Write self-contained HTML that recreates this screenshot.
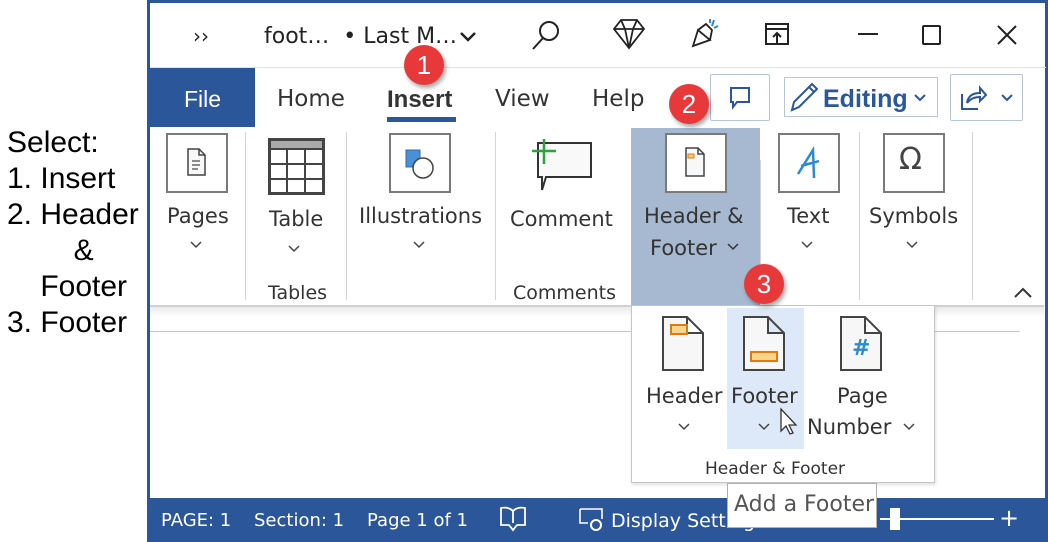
<!DOCTYPE html>
<html><head><meta charset="utf-8"><style>
*{margin:0;padding:0;box-sizing:border-box}
body{width:1048px;height:542px;position:relative;overflow:hidden;background:#fff;font-family:"Liberation Sans",sans-serif;color:#333}
.a{position:absolute}
.t{font-family:"DejaVu Sans","Liberation Sans",sans-serif;white-space:nowrap}
.badge{position:absolute;width:40px;height:40px;border-radius:50%;background:#e8393a;color:#fff;font-size:26px;text-align:center;line-height:40px;box-shadow:2px 3px 4px rgba(0,0,0,.35);font-family:"Liberation Sans",sans-serif}
.ib{position:absolute;border:2px solid #7a7a7a;background:#fff}
.sep{position:absolute;width:1px;background:#d4d4d4;top:132px;height:168px}
.lbl{font-size:21px;color:#333}
</style></head><body>
<div class="a" style="left:7px;top:125px;font-size:30px;line-height:36px;color:#000;font-family:'Liberation Sans',sans-serif;white-space:pre">Select:
1. Insert
2. Header
        &amp;
    Footer
3. Footer</div>
<div class="a" style="left:147px;top:0;width:901px;height:542px;border:3px solid #2b579a;border-bottom:none;background:#fff"></div>
<div class="a t" style="left:193px;top:24px;font-size:20px;color:#222">››</div>
<div class="a t" style="left:264px;top:24px;font-size:22px;color:#222">foot…&nbsp; • Last M…</div>
<svg class="a" style="left:458px;top:30px" width="20" height="14"><path d="M3 3 L10 10 L17 3" stroke="#222" stroke-width="2.5" fill="none"/></svg>
<svg class="a" style="left:530px;top:18px" width="34" height="32"><circle cx="19" cy="13" r="9" stroke="#222" stroke-width="2" fill="none"/><path d="M13 20 L3 31" stroke="#222" stroke-width="2"/></svg>
<svg class="a" style="left:612px;top:18px" width="34" height="32"><path d="M9 2 H25 L32 11 L17 30 L2 11 Z M2 11 H32 M9 2 L13 11 L17 30 L21 11 L25 2" stroke="#222" stroke-width="1.8" fill="none"/></svg>
<svg class="a" style="left:688px;top:16px" width="36" height="34"><path d="M5 30 L10 14 L22 24 Z M10 14 L18 8 L24 14 L22 24" stroke="#222" stroke-width="1.8" fill="none"/><path d="M26 4 L24 10 M30 10 L26 12 M22 3 L22 7" stroke="#2a8ad4" stroke-width="2"/></svg>
<svg class="a" style="left:764px;top:22px" width="28" height="26"><rect x="2" y="2" width="22" height="20" stroke="#222" stroke-width="2" fill="none"/><path d="M2 7 H24 M13 21 V11 M9 15 L13 11 L17 15" stroke="#222" stroke-width="2" fill="none"/></svg>
<div class="a" style="left:858px;top:33px;width:20px;height:2px;background:#222"></div>
<div class="a" style="left:922px;top:25px;width:19px;height:20px;border:2px solid #222;border-radius:2px"></div>
<svg class="a" style="left:996px;top:24px" width="22" height="22"><path d="M2 2 L20 20 M20 2 L2 20" stroke="#222" stroke-width="2"/></svg>
<div class="a" style="left:150px;top:67px;width:896px;height:1px;background:#e2e2e2"></div>
<div class="a" style="left:150px;top:68px;width:105px;height:59px;background:#2b579a;color:#fff;font-size:23px;text-align:center;line-height:62px" >File</div>
<div class="a t" style="left:277px;top:86px;font-size:23px">Home</div>
<div class="a" style="left:387px;top:86px;font-size:24px;font-weight:bold;color:#333;font-family:'Liberation Sans',sans-serif">Insert</div>
<div class="a" style="left:387px;top:117px;width:69px;height:5px;background:#2b579a"></div>
<div class="a t" style="left:495px;top:86px;font-size:23px">View</div>
<div class="a t" style="left:592px;top:86px;font-size:23px">Help</div>
<div class="a" style="left:710px;top:74px;width:60px;height:47px;border:1px solid #b8c6da;border-radius:2px"></div>
<svg class="a" style="left:729px;top:86px" width="24" height="24"><path d="M2 2 H20 V16 H8 L4 21 V16 H2 Z" stroke="#2b579a" stroke-width="2" fill="none"/></svg>
<div class="a" style="left:784px;top:77px;width:154px;height:40px;border:1px solid #b8c6da"></div>
<svg class="a" style="left:788px;top:80px" width="34" height="34"><path d="M4 30 L6 22 L24 4 L29 9 L11 27 Z M21 7 L26 12" stroke="#2b579a" stroke-width="2" fill="none"/></svg>
<div class="a" style="left:823px;top:85px;font-size:25px;font-weight:bold;color:#2b579a;font-family:'Liberation Sans',sans-serif">Editing</div>
<svg class="a" style="left:913px;top:93px" width="14" height="10"><path d="M2 2 L7 7 L12 2" stroke="#2b579a" stroke-width="2" fill="none"/></svg>
<div class="a" style="left:950px;top:74px;width:73px;height:47px;border:1px solid #b8c6da;border-radius:2px"></div>
<svg class="a" style="left:958px;top:84px" width="30" height="28"><path d="M4 10 V25 H20 M9 19 C10 12 15 9 22 9 V4 L28 11 L22 17 V13 C16 13 12 15 9 19" stroke="#2b579a" stroke-width="2" fill="none"/></svg>
<svg class="a" style="left:1000px;top:93px" width="14" height="10"><path d="M2 2 L7 7 L12 2" stroke="#2b579a" stroke-width="2" fill="none"/></svg>
<div class="a" style="left:150px;top:305px;width:894px;height:2px;background:#d0d0d0"></div>
<div class="a" style="left:150px;top:307px;width:894px;height:10px;background:linear-gradient(#ebebeb,#fff)"></div>
<div class="a" style="left:631px;top:128px;width:129px;height:178px;background:#a6b9d1"></div>
<div class="sep" style="left:245px"></div><div class="sep" style="left:346px"></div><div class="sep" style="left:495px"></div><div class="sep" style="left:859px"></div><div class="sep" style="left:972px"></div>
<div class="sep" style="left:760px;top:160px;height:140px"></div>
<div class="ib" style="left:166px;top:133px;width:62px;height:60px"></div>
<svg class="a" style="left:185px;top:147px" width="24" height="32"><path d="M3 2 H14 L20 8 V28 H3 Z M14 2 V8 H20" stroke="#444" stroke-width="1.5" fill="#f8f8f8"/><path d="M7 14 H15 M7 18 H15 M7 22 H13" stroke="#666" stroke-width="1.5"/></svg>
<div class="a t lbl" style="left:167px;top:204px">Pages</div>
<svg class="a" style="left:190px;top:241px" width="12" height="8"><path d="M1 1 L6 6 L11 1" stroke="#444" stroke-width="1.5" fill="none"/></svg>
<svg class="a" style="left:268px;top:138px" width="58" height="58"><rect x="1.5" y="1.5" width="54" height="54" fill="#fff" stroke="#444" stroke-width="3"/><rect x="3" y="3" width="51" height="8" fill="#aaa"/><path d="M3 11 H54 M3 26 H54 M3 41 H54 M19 11 V55 M37 11 V55" stroke="#444" stroke-width="2"/></svg>
<div class="a t lbl" style="left:269px;top:207px">Table</div>
<svg class="a" style="left:288px;top:245px" width="12" height="8"><path d="M1 1 L6 6 L11 1" stroke="#444" stroke-width="1.5" fill="none"/></svg>
<div class="a t" style="left:268px;top:282px;font-size:19px">Tables</div>
<div class="ib" style="left:389px;top:133px;width:62px;height:60px"></div>
<svg class="a" style="left:398px;top:143px" width="40" height="40"><rect x="8" y="7" width="14" height="17" fill="#4a90d9" stroke="#2b6cb0"/><circle cx="25" cy="25" r="10" fill="#fff" stroke="#444" stroke-width="1.5"/></svg>
<div class="a t lbl" style="left:359px;top:204px">Illustrations</div>
<svg class="a" style="left:413px;top:241px" width="12" height="8"><path d="M1 1 L6 6 L11 1" stroke="#444" stroke-width="1.5" fill="none"/></svg>
<svg class="a" style="left:530px;top:134px" width="64" height="60"><path d="M8 9 H61 V43 H16 L12 56 V43 H8 Z" stroke="#333" stroke-width="2" fill="#f9f9f9"/><path d="M2 17 H26 M14 5 V30" stroke="#2ea043" stroke-width="2.5"/></svg>
<div class="a t lbl" style="left:510px;top:207px">Comment</div>
<div class="a t" style="left:513px;top:282px;font-size:19px">Comments</div>
<div class="ib" style="left:665px;top:133px;width:62px;height:60px"></div>
<svg class="a" style="left:683px;top:146px" width="26" height="34"><path d="M3 2 H15 L21 8 V30 H3 Z M15 2 V8 H21" stroke="#444" stroke-width="1.5" fill="#f8f8f8"/><rect x="5" y="8" width="6" height="4" fill="#f5d080" stroke="#e07a10"/></svg>
<div class="a t lbl" style="left:644px;top:204px">Header &amp;</div>
<div class="a t lbl" style="left:650px;top:236px">Footer</div>
<svg class="a" style="left:727px;top:243px" width="12" height="8"><path d="M1 1 L6 6 L11 1" stroke="#333" stroke-width="1.5" fill="none"/></svg>
<div class="ib" style="left:778px;top:133px;width:62px;height:60px"></div>
<svg class="a" style="left:793px;top:144px" width="34" height="38"><path d="M5 30 L20 6 L21 34 M8 22 C14 20 20 19 26 17" stroke="#2a8ad4" stroke-width="2.5" fill="none"/></svg>
<div class="a t lbl" style="left:787px;top:204px">Text</div>
<svg class="a" style="left:801px;top:241px" width="12" height="8"><path d="M1 1 L6 6 L11 1" stroke="#444" stroke-width="1.5" fill="none"/></svg>
<div class="ib" style="left:883px;top:133px;width:62px;height:60px"></div>
<div class="a t" style="left:899px;top:142px;font-size:30px;color:#444">Ω</div>
<div class="a t lbl" style="left:869px;top:204px">Symbols</div>
<svg class="a" style="left:906px;top:241px" width="12" height="8"><path d="M1 1 L6 6 L11 1" stroke="#444" stroke-width="1.5" fill="none"/></svg>
<svg class="a" style="left:1013px;top:287px" width="20" height="12"><path d="M2 10 L10 2 L18 10" stroke="#333" stroke-width="2" fill="none"/></svg>
<div class="a" style="left:150px;top:331px;width:870px;height:1px;background:#c8c8c8"></div>
<div class="a" style="left:631px;top:305px;width:304px;height:178px;background:#fff;border:1px solid #c6c6c6;box-shadow:1px 2px 3px rgba(0,0,0,.12)"></div>
<div class="a" style="left:727px;top:308px;width:77px;height:141px;background:#dde8f8"></div>
<svg class="a" style="left:660px;top:314px" width="46" height="60"><path d="M3 3 H27 L43 19 V56 H3 Z M27 3 V19 H43" stroke="#444" stroke-width="2" fill="#f7f7f7"/><rect x="11" y="11" width="16" height="9" fill="#f7d58c" stroke="#e07a10" stroke-width="2"/></svg>
<svg class="a" style="left:741px;top:314px" width="46" height="60"><path d="M3 3 H27 L43 19 V56 H3 Z M27 3 V19 H43" stroke="#444" stroke-width="2" fill="#f7f7f7"/><rect x="10" y="38" width="26" height="9" fill="#f7d58c" stroke="#e07a10" stroke-width="2"/></svg>
<svg class="a" style="left:838px;top:314px" width="46" height="60"><path d="M3 3 H27 L43 19 V56 H3 Z M27 3 V19 H43" stroke="#444" stroke-width="2" fill="#f7f7f7"/></svg>
<div class="a t" style="left:852px;top:336px;font-size:22px;font-weight:bold;color:#2a8ad4">#</div>
<div class="a t lbl" style="left:646px;top:384px">Header</div>
<div class="a t lbl" style="left:731px;top:384px">Footer</div>
<div class="a t lbl" style="left:837px;top:384px">Page</div>
<div class="a t lbl" style="left:807px;top:415px">Number</div>
<svg class="a" style="left:678px;top:423px" width="12" height="8"><path d="M1 1 L6 6 L11 1" stroke="#444" stroke-width="1.5" fill="none"/></svg>
<svg class="a" style="left:758px;top:423px" width="12" height="8"><path d="M1 1 L6 6 L11 1" stroke="#444" stroke-width="1.5" fill="none"/></svg>
<svg class="a" style="left:903px;top:423px" width="12" height="8"><path d="M1 1 L6 6 L11 1" stroke="#444" stroke-width="1.5" fill="none"/></svg>
<svg class="a" style="left:779px;top:407px" width="20" height="28"><path d="M2 2 V24 L7 19 L11 27 L14 26 L10 18 L17 18 Z" fill="#fff" stroke="#333" stroke-width="1.3"/></svg>
<div class="a t" style="left:705px;top:459px;font-size:17px">Header &amp; Footer</div>
<div class="a" style="left:150px;top:498px;width:898px;height:44px;background:#2b579a"></div>
<div class="a t" style="left:161px;top:510px;font-size:18px;color:#fff">PAGE: 1</div>
<div class="a t" style="left:254px;top:510px;font-size:18px;color:#fff">Section: 1</div>
<div class="a t" style="left:367px;top:510px;font-size:18px;color:#fff">Page 1 of 1</div>
<svg class="a" style="left:499px;top:505px" width="30" height="28"><path d="M2 3 C7 2 11 3 14 6 C17 3 21 2 26 3 V20 H18 L14 25 L10 20 H2 Z M14 6 V18" stroke="#fff" stroke-width="1.8" fill="none"/></svg>
<svg class="a" style="left:578px;top:507px" width="30" height="26"><path d="M2 2 H24 V12 M2 2 V16 H10" stroke="#fff" stroke-width="1.6" fill="none"/><circle cx="18" cy="18" r="5" stroke="#fff" stroke-width="2" fill="none"/></svg>
<div class="a t" style="left:611px;top:510px;font-size:19px;color:#fff">Display Settings</div>
<div class="a" style="left:880px;top:518px;width:114px;height:2px;background:#fff"></div>
<div class="a" style="left:890px;top:508px;width:10px;height:22px;background:#fff"></div>
<div class="a t" style="left:999px;top:504px;font-size:24px;color:#fff">+</div>
<div class="a t" style="left:727px;top:483px;width:150px;height:45px;background:#fff;border:1px solid #b0b0b0;font-size:22px;color:#555;padding:8px 0 0 6px">Add a Footer</div>
<div class="badge" style="left:404px;top:45px">1</div>
<div class="badge" style="left:669px;top:84px">2</div>
<div class="badge" style="left:744px;top:264px">3</div>
</body></html>
